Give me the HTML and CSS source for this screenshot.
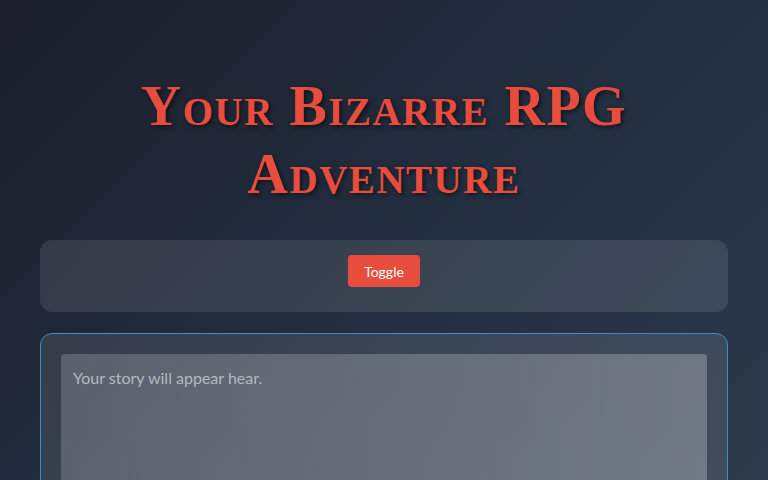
FILE: index.html
```html
<!DOCTYPE html>
<html lang="en">
<head>
  <meta charset="UTF-8" />
  <meta name="viewport" content="width=device-width, initial-scale=1.0" />
  <title>Your Bizarre RPG Adventure</title>
  <link rel="stylesheet" href="styles.css">
</head>
<body>
  <div class="container">
    <h1 class="title">Your Bizarre RPG Adventure</h1>

    <div class="controls">
      <button class="toggle-btn" id="toggleBtn">Toggle</button>
    </div>

    <div class="story-box">
      <textarea class="story" placeholder="Your story will appear hear."></textarea>
    </div>
  </div>
</body>
</html>
```

FILE: styles.css
```css
* {
  margin: 0;
  padding: 0;
  box-sizing: border-box;
}

html, body {
  width: 100%;
  min-height: 100%;
}

body {
  font-family: 'Lato', 'Open Sans', sans-serif;
  background: linear-gradient(135deg, #1c1f2b 0%, #222d3e 50%, #2c3a4c 100%);
  background-attachment: fixed;
  color: #ecf0f1;
}

.container {
  max-width: 768px;
  margin: 0 auto;
  padding: 72px 40px 40px;
}

/* titulo grande em vermelho */
.title {
  font-family: 'Liberation Serif', 'DejaVu Serif', serif;
  font-variant: small-caps;
  font-weight: bold;
  font-size: 56px;
  line-height: 68px;
  letter-spacing: 1.5px;
  text-align: center;
  color: #e74c3c;
  text-shadow: 2px 2px 4px rgba(0, 0, 0, 0.55);
  margin-bottom: 32px;
}

.controls {
  background: rgba(255, 255, 255, 0.1);
  border-radius: 12px;
  padding: 15px 20px 25px;
  display: flex;
  justify-content: center;
}

.toggle-btn {
  font-family: 'Lato', sans-serif;
  font-size: 14px;
  color: #fff;
  background: #e74c3c;
  border: none;
  border-radius: 4px;
  height: 32px;
  padding: 0 16px;
  cursor: pointer;
}

.story-box {
  margin-top: 21px;
  background: rgba(255, 255, 255, 0.1);
  border: 1px solid #3a8fd0;
  border-radius: 12px;
  padding: 20px;
}

.story {
  display: block;
  width: 100%;
  height: 300px;
  resize: none;
  border: none;
  border-radius: 4px;
  padding: 13px 12px;
  font-family: 'Lato', sans-serif;
  font-size: 16px;
  line-height: 22px;
  color: #ecf0f1;
  background: linear-gradient(90deg, rgba(255, 255, 255, 0.18), rgba(255, 255, 255, 0.25));
}

.story::placeholder {
  color: #b4b9bf;
}
```
